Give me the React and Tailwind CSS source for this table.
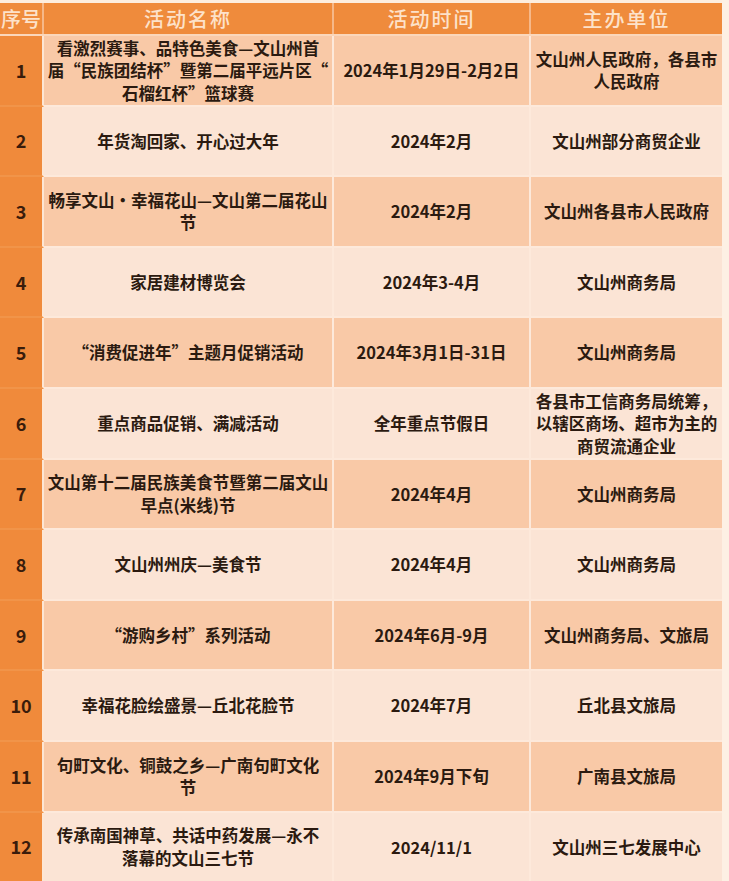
import React from 'react';

const rows = [
  {
    no: '1',
    name: ['看激烈赛事、品特色美食—文山州首', '届“民族团结杯”暨第二届平远片区“', '石榴红杯”篮球赛'],
    time: ['2024年1月29日-2月2日'],
    org: ['文山州人民政府，各县市', '人民政府'],
  },
  { no: '2', name: ['年货淘回家、开心过大年'], time: ['2024年2月'], org: ['文山州部分商贸企业'] },
  { no: '3', name: ['畅享文山•幸福花山—文山第二届花山', '节'], time: ['2024年2月'], org: ['文山州各县市人民政府'] },
  { no: '4', name: ['家居建材博览会'], time: ['2024年3-4月'], org: ['文山州商务局'] },
  { no: '5', name: ['“消费促进年”主题月促销活动'], time: ['2024年3月1日-31日'], org: ['文山州商务局'] },
  {
    no: '6',
    name: ['重点商品促销、满减活动'],
    time: ['全年重点节假日'],
    org: ['各县市工信商务局统筹，', '以辖区商场、超市为主的', '商贸流通企业'],
  },
  { no: '7', name: ['文山第十二届民族美食节暨第二届文山', '早点(米线)节'], time: ['2024年4月'], org: ['文山州商务局'] },
  { no: '8', name: ['文山州州庆—美食节'], time: ['2024年4月'], org: ['文山州商务局'] },
  { no: '9', name: ['“游购乡村”系列活动'], time: ['2024年6月-9月'], org: ['文山州商务局、文旅局'] },
  { no: '10', name: ['幸福花脸绘盛景—丘北花脸节'], time: ['2024年7月'], org: ['丘北县文旅局'] },
  { no: '11', name: ['句町文化、铜鼓之乡—广南句町文化', '节'], time: ['2024年9月下旬'], org: ['广南县文旅局'] },
  { no: '12', name: ['传承南国神草、共话中药发展—永不', '落幕的文山三七节'], time: ['2024/11/1'], org: ['文山州三七发展中心'] },
];

const Lines = ({ lines }) => (
  <div className="text-center whitespace-nowrap leading-[22.5px]">
    {lines.map((l, i) => (
      <div key={i}>{l}</div>
    ))}
  </div>
);

export default function App() {
  return (
    <div
      className="w-[729px] h-[881px] overflow-hidden bg-[#fdf0e4] flex items-start"
      style={{ fontFamily: '"Noto Sans CJK SC", "Noto Sans", sans-serif' }}
    >
      <div className="w-[722px] flex flex-col shrink-0">
        <div className="h-[3px] shrink-0 bg-[#fdeedf]" />
        <div className="flex h-[33px] shrink-0 bg-[#ef8b3c] text-[#fde2ca] text-[20px] font-medium tracking-[2px] border-b-2 border-[#fbd7bb]">
          <div className="w-[44px] flex items-center justify-center border-r-2 border-[#f6b889] tracking-normal overflow-hidden">序号</div>
          <div className="w-[290px] flex items-center justify-center border-r-2 border-[#f6b889]">活动名称</div>
          <div className="w-[197px] flex items-center justify-center border-r-2 border-[#f6b889]">活动时间</div>
          <div className="flex-1 flex items-center justify-center">主办单位</div>
        </div>
        {rows.map((r, i) => {
          const bg = i % 2 === 0 ? 'bg-[#f9c9a7]' : 'bg-[#fbe4d5]';
          return (
            <div key={r.no} className="flex h-[70.6px] shrink-0 text-[16.5px] font-bold text-[#2b1a10]">
              <div className="w-[44px] flex items-center justify-center bg-[#f08a3b] border-r-2 border-b-2 border-r-[#fde6d4] border-b-[#f19449] text-[18px] text-[#3a1c0b]">
                {r.no}
              </div>
              <div className={`w-[290px] flex items-center justify-center border-r-2 border-b-2 border-[#fde9db] ${bg}`}>
                <Lines lines={r.name} />
              </div>
              <div className={`w-[197px] flex items-center justify-center border-r-2 border-b-2 border-[#fde9db] ${bg}`}>
                <Lines lines={r.time} />
              </div>
              <div className={`flex-1 flex items-center justify-center border-b-2 border-[#fde9db] ${bg}`}>
                <Lines lines={r.org} />
              </div>
            </div>
          );
        })}
      </div>
    </div>
  );
}
